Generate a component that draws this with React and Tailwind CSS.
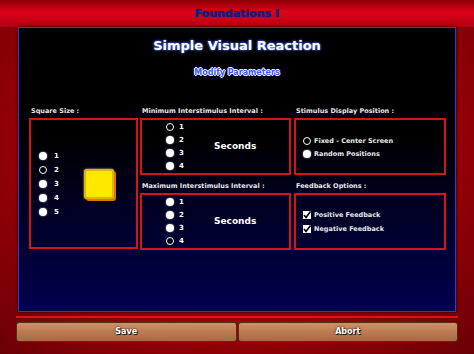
const font = { fontFamily: '"DejaVu Sans", Verdana, sans-serif' };

const Radio = ({ checked }) => (
  <span
    className={
      'inline-block w-[8px] h-[8px] rounded-full shrink-0 ' +
      (checked ? 'bg-black border border-white' : 'bg-white shadow-[0_0_2px_#aab]')
    }
  />
);

const Check = () => (
  <span className="inline-flex items-center justify-center w-[8px] h-[8px] bg-white shrink-0">
    <svg width="8" height="8" viewBox="0 0 8 8">
      <path d="M1 4 L3 6.5 L7.5 0.5" stroke="#000" strokeWidth="1.6" fill="none" />
    </svg>
  </span>
);

const Label = ({ children }) => (
  <div className="h-[11px] pl-[2px] text-[6.5px] font-bold text-[#e8e8e8] leading-[9px]">{children}</div>
);

const Box = ({ className, children }) => (
  <div className={'border-2 border-[#d41418] ' + className}>{children}</div>
);

const IntervalBox = ({ selected }) => (
  <Box className="h-[57px] flex items-center">
    <div className="flex flex-col gap-[5px] pl-[24px] w-[72px]">
      {[1, 2, 3, 4].map((n) => (
        <div key={n} className="flex items-center gap-[5px] text-[7px] font-bold text-white leading-[8px]">
          <Radio checked={n === selected} />
          <span>{n}</span>
        </div>
      ))}
    </div>
    <div className="text-[9px] font-bold text-white">Seconds</div>
  </Box>
);

export default function App() {
  return (
    <div
      style={font}
      className="w-[474px] h-[354px] flex flex-col bg-[radial-gradient(ellipse_at_50%_40%,#c40010_0%,#a00008_55%,#6a0004_100%)] overflow-hidden"
    >
      <div className="h-[27px] flex items-center justify-center bg-[linear-gradient(180deg,#8a0006_0%,#e0001a_45%,#b00010_100%)]">
        <span className="text-[11px] font-bold text-[#0c1f86] pt-[2px] [text-shadow:0_0_1px_#0c1f86]">Foundations I</span>
      </div>
      <div className="mx-[18px] h-[285px] border border-[#2a3ad8] shadow-[0_0_3px_#200] bg-[linear-gradient(180deg,#000000_0%,#000000_38%,#000024_64%,#00004e_100%)] flex flex-col">
        <div className="pt-[9px] text-center text-[13px] font-bold text-white leading-[18px] [text-shadow:0_0_3px_#4a6cff,0_0_2px_#4a6cff]">
          Simple Visual Reaction
        </div>
        <div className="pt-[13px] text-center text-[8px] font-bold text-[#3a5cf0] leading-[10px] [text-shadow:1px_0_0_#fff,-1px_0_0_#fff,0_1px_0_#fff,0_-1px_0_#fff]">
          Modify Parameters
        </div>
        <div className="mt-[29px] ml-[10px] flex gap-[2px]">
          <div className="w-[109px]">
            <Label>Square Size :</Label>
            <Box className="h-[131px] flex items-center">
              <div className="flex flex-col gap-[6px] pl-[8px] w-[53px]">
                {[1, 2, 3, 4, 5].map((n) => (
                  <div key={n} className="flex items-center gap-[7px] text-[7px] font-bold text-white leading-[8px]">
                    <Radio checked={n === 2} />
                    <span>{n}</span>
                  </div>
                ))}
              </div>
              <div className="w-[30px] h-[30px] rounded-[3px] bg-[#ffe800] border-2 border-[#d8b800] shadow-[2px_2px_0_#e07800,0_0_2px_#fff28a]" />
            </Box>
          </div>
          <div className="w-[151px]">
            <Label>Minimum Interstimulus Interval :</Label>
            <IntervalBox selected={1} />
            <div className="h-[18px] flex items-end">
              <Label>Maximum Interstimulus Interval :</Label>
            </div>
            <IntervalBox selected={4} />
          </div>
          <div className="w-[152px] ml-[1px]">
            <Label>Stimulus Display Position :</Label>
            <Box className="h-[57px] flex flex-col justify-center gap-[5px] pl-[7px] pt-[2px]">
              <div className="flex items-center gap-[3px] text-[6.5px] font-bold text-[#e8e8e8] leading-[8px]">
                <Radio checked />
                <span>Fixed - Center Screen</span>
              </div>
              <div className="flex items-center gap-[3px] text-[6.5px] font-bold text-[#e8e8e8] leading-[8px]">
                <Radio />
                <span>Random Positions</span>
              </div>
            </Box>
            <div className="h-[18px] flex items-end">
              <Label>Feedback Options :</Label>
            </div>
            <Box className="h-[57px] flex flex-col justify-center gap-[6px] pl-[7px]">
              <div className="flex items-center gap-[3px] text-[6.5px] font-bold text-[#e8e8e8] leading-[8px]">
                <Check />
                <span>Positive Feedback</span>
              </div>
              <div className="flex items-center gap-[3px] text-[6.5px] font-bold text-[#e8e8e8] leading-[8px]">
                <Check />
                <span>Negative Feedback</span>
              </div>
            </Box>
          </div>
        </div>
      </div>
      <div className="h-[2px] mt-[4px] mx-[16px] bg-[#ff1a2a] opacity-70" />
      <div className="mt-[4px] mx-[16px] flex gap-[1px]">
        {['Save', 'Abort'].map((t) => (
          <button
            key={t}
            className="flex-1 h-[20px] rounded-[3px] bg-[linear-gradient(180deg,#d09068_0%,#bb7a52_50%,#a86a44_100%)] border border-[#5a2a14] text-[8px] font-bold text-white [text-shadow:0_0_2px_#000,1px_1px_0_#3a1a08]"
          >
            {t}
          </button>
        ))}
      </div>
    </div>
  );
}
